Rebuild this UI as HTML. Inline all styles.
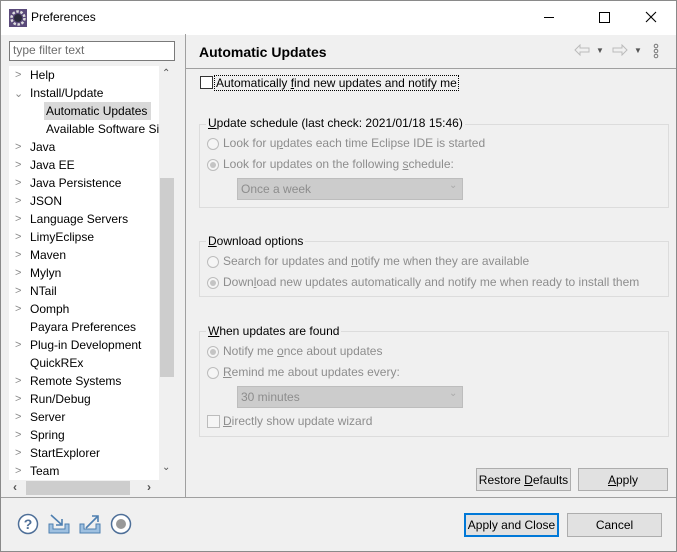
<!DOCTYPE html>
<html><head><style>
*{margin:0;padding:0;box-sizing:border-box}
body{width:677px;height:552px;background:#f0f0f0;font-family:"Segoe UI","Liberation Sans",sans-serif;font-size:12px;color:#000;position:relative;overflow:hidden}
.a{position:absolute;white-space:nowrap}
.t{position:absolute;left:30px;line-height:18px;white-space:nowrap}
.ch{position:absolute;left:15px;color:#888;font-size:11px}
.g{position:absolute;border:1px solid #dcdcdc}
.lg{position:absolute;background:#f0f0f0;padding:0 2px;color:#000;white-space:nowrap}
.dis{color:#8d8d8d}
.rb{position:absolute;width:12px;height:12px;border:1px solid #bcbcbc;border-radius:50%;background:#f5f5f5}
.rb.on::after{content:"";position:absolute;left:2px;top:2px;width:6px;height:6px;border-radius:50%;background:#c4c4c4}
.btn{position:absolute;border:1px solid #adadad;background:#e1e1e1;display:flex;align-items:center;justify-content:center;white-space:nowrap}
u{text-decoration:underline}
</style></head><body>
<div class="a" style="left:0;top:0;width:677px;height:552px;border:1px solid #8a8a8a"></div>
<div class="a" style="left:1px;top:1px;width:675px;height:34px;background:#fff"></div>
<svg class="a" style="left:9px;top:9px" width="18" height="18" viewBox="0 0 18 18"><rect x="0" y="0" width="18" height="18" fill="#5a4a7a"/><circle cx="9" cy="9" r="6.5" fill="none" stroke="#ddd" stroke-width="2.5" stroke-dasharray="2.5 1.6"/><circle cx="9" cy="9" r="4" fill="#2b2b3b"/></svg>
<div class="a" style="left:31px;top:10px;font-size:12px">Preferences</div>
<div class="a" style="left:544px;top:17px;width:10px;height:1px;background:#000"></div>
<div class="a" style="left:599px;top:12px;width:11px;height:11px;border:1px solid #000"></div>
<svg class="a" style="left:645px;top:11px" width="12" height="12"><path d="M1 1L11 11M11 1L1 11" stroke="#000" stroke-width="1.1"/></svg>

<div class="a" style="left:9px;top:41px;width:166px;height:20px;border:1px solid #7a7a7a;background:#fff"></div>
<div class="a" style="left:13px;top:43px;color:#6d6d6d">type filter text</div>
<div class="a" style="left:9px;top:66px;width:166px;height:430px;background:#fff"></div>
<div class="a" style="left:44px;top:102px;width:107px;height:18px;background:#d9d9d9"></div>
<div class="a" style="left:159px;top:66px;width:16px;height:414px;background:#f0f0f0"></div>
<div class="a" style="left:160px;top:178px;width:14px;height:199px;background:#cdcdcd"></div>
<div class="a" style="left:162px;top:68px;color:#555;font-size:10px">⌃</div>
<div class="a" style="left:162px;top:462px;color:#555;font-size:10px">⌄</div>
<div class="a" style="left:9px;top:480px;width:166px;height:16px;background:#f0f0f0"></div>
<div class="a" style="left:26px;top:481px;width:104px;height:14px;background:#cdcdcd"></div>
<div class="a" style="left:13px;top:480px;color:#555;font-weight:bold">‹</div>
<div class="a" style="left:147px;top:480px;color:#555;font-weight:bold">›</div>

<div class="ch" style="top:69px">&gt;</div><div class="t" style="top:66px">Help</div>
<div class="ch" style="top:87px;left:14px">⌄</div><div class="t" style="top:84px">Install/Update</div>
<div class="t" style="top:102px;left:46px">Automatic Updates</div>
<div class="t" style="top:120px;left:46px;width:113px;overflow:hidden">Available Software Sites</div>
<div class="ch" style="top:141px">&gt;</div><div class="t" style="top:138px">Java</div>
<div class="ch" style="top:159px">&gt;</div><div class="t" style="top:156px">Java EE</div>
<div class="ch" style="top:177px">&gt;</div><div class="t" style="top:174px">Java Persistence</div>
<div class="ch" style="top:195px">&gt;</div><div class="t" style="top:192px">JSON</div>
<div class="ch" style="top:213px">&gt;</div><div class="t" style="top:210px">Language Servers</div>
<div class="ch" style="top:231px">&gt;</div><div class="t" style="top:228px">LimyEclipse</div>
<div class="ch" style="top:249px">&gt;</div><div class="t" style="top:246px">Maven</div>
<div class="ch" style="top:267px">&gt;</div><div class="t" style="top:264px">Mylyn</div>
<div class="ch" style="top:285px">&gt;</div><div class="t" style="top:282px">NTail</div>
<div class="ch" style="top:303px">&gt;</div><div class="t" style="top:300px">Oomph</div>
<div class="t" style="top:318px">Payara Preferences</div>
<div class="ch" style="top:339px">&gt;</div><div class="t" style="top:336px">Plug-in Development</div>
<div class="t" style="top:354px">QuickREx</div>
<div class="ch" style="top:375px">&gt;</div><div class="t" style="top:372px">Remote Systems</div>
<div class="ch" style="top:393px">&gt;</div><div class="t" style="top:390px">Run/Debug</div>
<div class="ch" style="top:411px">&gt;</div><div class="t" style="top:408px">Server</div>
<div class="ch" style="top:429px">&gt;</div><div class="t" style="top:426px">Spring</div>
<div class="ch" style="top:447px">&gt;</div><div class="t" style="top:444px">StartExplorer</div>
<div class="ch" style="top:465px">&gt;</div><div class="t" style="top:462px">Team</div>

<div class="a" style="left:185px;top:34px;width:1px;height:463px;background:#a0a0a0"></div>
<div class="a" style="left:186px;top:68px;width:490px;height:1px;background:#a0a0a0"></div>
<div class="a" style="left:1px;top:497px;width:675px;height:1px;background:#a0a0a0"></div>
<div class="a" style="left:199px;top:44px;font-size:14px;font-weight:bold">Automatic Updates</div>
<svg class="a" style="left:574px;top:44px" width="16" height="12"><path d="M1 6L6 1V4H15V8H6V11Z" fill="none" stroke="#bbb"/></svg>
<div class="a" style="left:596px;top:46px;color:#555;font-size:8px">▼</div>
<svg class="a" style="left:612px;top:44px" width="16" height="12"><path d="M15 6L10 1V4H1V8H10V11Z" fill="none" stroke="#bbb"/></svg>
<div class="a" style="left:634px;top:46px;color:#555;font-size:8px">▼</div>
<svg class="a" style="left:653px;top:43px" width="6" height="16"><circle cx="3" cy="3" r="1.8" fill="none" stroke="#777"/><circle cx="3" cy="8" r="1.8" fill="none" stroke="#777"/><circle cx="3" cy="13" r="1.8" fill="none" stroke="#777"/></svg>

<div class="a" style="left:200px;top:76px;width:13px;height:13px;border:1px solid #333;background:#fff"></div>
<div class="a" style="left:214px;top:75px;border:1px dotted #000;padding:0 1px;line-height:14px">Automatically <u>f</u>ind new updates and notify me</div>

<div class="g" style="left:199px;top:124px;width:470px;height:84px"></div>
<div class="lg" style="left:206px;top:116px"><u>U</u>pdate schedule (last check: 2021/01/18 15:46)</div>
<div class="rb" style="left:207px;top:138px"></div><div class="a dis" style="left:223px;top:136px">Look for u<u>p</u>dates each time Eclipse IDE is started</div>
<div class="rb on" style="left:207px;top:159px"></div><div class="a dis" style="left:223px;top:157px">Look for updates on the following <u>s</u>chedule:</div>
<div class="a" style="left:237px;top:178px;width:226px;height:22px;background:#cccccc;border:1px solid #bdbdbd"></div>
<div class="a dis" style="left:241px;top:182px">Once a week</div>
<div class="a" style="left:449px;top:180px;color:#aaa;font-size:10px">⌄</div>

<div class="g" style="left:199px;top:241px;width:470px;height:56px"></div>
<div class="lg" style="left:206px;top:234px"><u>D</u>ownload options</div>
<div class="rb" style="left:207px;top:256px"></div><div class="a dis" style="left:223px;top:254px">Search for updates and <u>n</u>otify me when they are available</div>
<div class="rb on" style="left:207px;top:277px"></div><div class="a dis" style="left:223px;top:275px">Down<u>l</u>oad new updates automatically and notify me when ready to install them</div>

<div class="g" style="left:199px;top:331px;width:470px;height:106px"></div>
<div class="lg" style="left:206px;top:324px"><u>W</u>hen updates are found</div>
<div class="rb on" style="left:207px;top:346px"></div><div class="a dis" style="left:223px;top:344px">Notify me <u>o</u>nce about updates</div>
<div class="rb" style="left:207px;top:367px"></div><div class="a dis" style="left:223px;top:365px"><u>R</u>emind me about updates every:</div>
<div class="a" style="left:237px;top:386px;width:226px;height:22px;background:#cccccc;border:1px solid #bdbdbd"></div>
<div class="a dis" style="left:241px;top:390px">30 minutes</div>
<div class="a" style="left:449px;top:388px;color:#aaa;font-size:10px">⌄</div>
<div class="a" style="left:207px;top:415px;width:13px;height:13px;border:1px solid #bcbcbc;background:#f5f5f5"></div>
<div class="a dis" style="left:223px;top:414px"><u>D</u>irectly show update wizard</div>

<div class="btn" style="left:476px;top:468px;width:95px;height:23px"><span>Restore <u>D</u>efaults</span></div>
<div class="btn" style="left:578px;top:468px;width:90px;height:23px"><span><u>A</u>pply</span></div>
<div class="btn" style="left:464px;top:513px;width:95px;height:24px;border:2px solid #0078d7">Apply and Close</div>
<div class="btn" style="left:567px;top:513px;width:95px;height:24px">Cancel</div>

<svg class="a" style="left:17px;top:513px" width="22" height="22"><circle cx="11" cy="11" r="9.5" fill="#fff" stroke="#4e6f98" stroke-width="1.5"/><text x="11" y="16" font-size="14" font-weight="bold" text-anchor="middle" fill="#4e6f98" font-family="Liberation Sans">?</text></svg>
<svg class="a" style="left:47px;top:513px" width="24" height="22"><path d="M2 11v9h20v-9h-4v5H6v-5z" fill="#9ec0e0" stroke="#4e7fb0"/><path d="M4 2l11 10M15 6v6H9" stroke="#4e7fb0" stroke-width="1.6" fill="none"/></svg>
<svg class="a" style="left:78px;top:513px" width="24" height="22"><path d="M2 11v9h20v-9h-4v5H6v-5z" fill="#9ec0e0" stroke="#4e7fb0"/><path d="M8 15L20 3M14 3h6v6" stroke="#4e7fb0" stroke-width="1.6" fill="none"/></svg>
<svg class="a" style="left:110px;top:513px" width="22" height="22"><circle cx="11" cy="11" r="9.5" fill="#fff" stroke="#4e6f98" stroke-width="1.5"/><circle cx="11" cy="11" r="5" fill="#999"/></svg>
</body></html>
